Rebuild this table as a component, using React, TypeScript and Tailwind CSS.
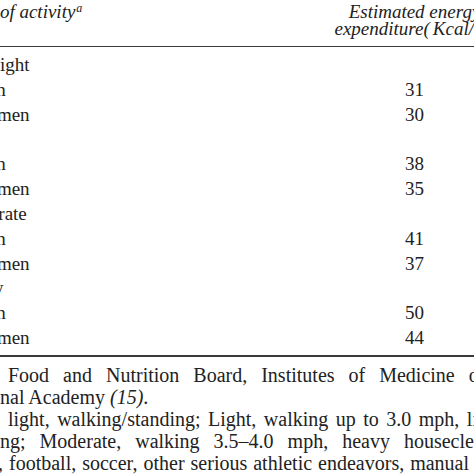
import React from 'react';

type Row = { label: string; value?: string; sub?: boolean };

const rows: Row[] = [
    { label: 'Very light' },
    { label: 'Men', value: '31', sub: true },
    { label: 'Women', value: '30', sub: true },
    { label: 'Light' },
    { label: 'Men', value: '38', sub: true },
    { label: 'Women', value: '35', sub: true },
    { label: 'Moderate' },
    { label: 'Men', value: '41', sub: true },
    { label: 'Women', value: '37', sub: true },
    { label: 'Heavy' },
    { label: 'Men', value: '50', sub: true },
    { label: 'Women', value: '44', sub: true },
];

const App: React.FC = () => {
    return (
        <div className="w-[474px] h-[474px] overflow-hidden bg-white text-[#222] font-['Liberation_Serif',serif]">
            {/* table is cropped on both sides, so it sits shifted left */}
            <div className="ml-[-46px] w-[560px]">
                <div className="grid grid-cols-[380.5px_160px] pt-[3px] pb-[8.5px] text-[19px] leading-[17px] italic">
                    <div>
                        Level of activity<sup className="text-[12px] ml-[1px]">a</sup>
                    </div>
                    <div className="text-center whitespace-nowrap">
                        <div>Estimated energy</div>
                        <div>
                            expenditure(<span className="ml-[3px]">Kcal/kg/day)</span>
                        </div>
                    </div>
                </div>
                <div className="h-[1.5px] bg-[#3a3a3a]" />
                <div className="pt-[6.3px] pb-[4.6px] text-[19px] leading-[24.8px]">
                    {rows.map((r, i) => (
                        <div key={i} className="grid grid-cols-[380.5px_160px] h-[24.8px]">
                            <div className={r.sub ? 'pl-[17px]' : ''}>{r.label}</div>
                            <div className="text-center">{r.value}</div>
                        </div>
                    ))}
                </div>
                <div className="h-[1.5px] bg-[#3a3a3a]" />
            </div>
            <div className="pt-[7px] text-[20px] leading-[22px] whitespace-nowrap">
                <div className="pl-[8px] [word-spacing:9px]">
                    Food and Nutrition Board, Institutes of Medicine of the National
                </div>
                <div>
                    nal Academy <span className="italic">(15)</span>.
                </div>
                <div className="pl-[8px] [word-spacing:2.5px]">
                    light, walking/standing; Light, walking up to 3.0 mph, light housecleaning,
                </div>
                <div className="[word-spacing:9px]">
                    ng; Moderate, walking 3.5–4.0 mph, heavy housecleaning,
                </div>
                <div className="ml-[-2px] [word-spacing:1px]">
                    , football, soccer, other serious athletic endeavors, manual labor.
                </div>
            </div>
        </div>
    );
};

export default App;
